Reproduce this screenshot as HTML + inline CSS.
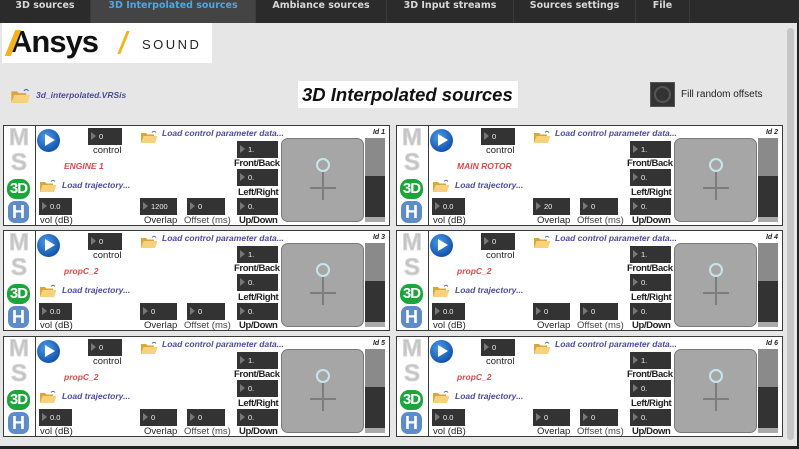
<!DOCTYPE html>
<html><head><meta charset="utf-8"><style>
*{margin:0;padding:0;box-sizing:border-box}
body{width:799px;height:449px;overflow:hidden;background:#e6e6e6;font-family:"Liberation Sans",sans-serif;position:relative}
.tabs{position:absolute;left:0;top:0;width:799px;height:23px;background:#2b2b2b}
.tab{position:absolute;top:0;height:23px;line-height:23px;text-align:center;color:#d8d8d8;font:bold 9.5px "DejaVu Sans",sans-serif;border-right:1px solid #3c3c3c}
.tab.sel{background:#444;color:#4aa8e8}
.a{position:absolute}
.panel{position:absolute;width:387px;height:101px;background:#fff;border:1.5px solid #3a3a3a}
.div{position:absolute;left:31px;top:0;bottom:0;border-left:1.5px solid #3a3a3a}
.ms{position:absolute;left:3px;width:24px;text-align:center;font:bold 24px "Liberation Sans",sans-serif;color:#c4c4c4;-webkit-text-stroke:1px #d8d8d8;line-height:22px}
.d3{position:absolute;left:3px;top:53px;width:23px;height:20px;border-radius:9px;background:#1da53b;color:#fff;font:bold 15px "Liberation Sans",sans-serif;text-align:center;line-height:20px;letter-spacing:-1px}
.hh{position:absolute;left:4px;top:75px;width:21px;height:22px;border-radius:7px;background:#5d8cc8;color:#fff;font:bold 18px "Liberation Sans",sans-serif;text-align:center;line-height:22px}
.play{position:absolute;left:33px;top:3px;width:23px;height:23px;border-radius:50%;background:radial-gradient(circle at 40% 35%,#4c9ae8,#1456b0 70%,#0c3c85)}
.play:after{content:"";position:absolute;left:8px;top:5px;border-left:10px solid #fff;border-top:6.5px solid transparent;border-bottom:6.5px solid transparent}
.nb{position:absolute;height:17px;background:#333;color:#eee;font-size:7.5px;line-height:17px;padding-left:11px}
.nb:before{content:"";position:absolute;left:3px;top:4px;border-left:5px solid #777;border-top:4.5px solid transparent;border-bottom:4.5px solid transparent}
.lb{position:absolute;font-size:9.5px;color:#222;white-space:nowrap;line-height:11px}
.bl{position:absolute;font-size:9.5px;font-weight:bold;color:#222;white-space:nowrap;letter-spacing:-0.4px;line-height:11px}
.ld{position:absolute;font:italic bold 8.5px "Liberation Sans",sans-serif;color:#4b4ba0;white-space:nowrap}
.nm{position:absolute;font:italic bold 8.5px "Liberation Sans",sans-serif;color:#e0474c;white-space:nowrap}
.pad{position:absolute;left:277px;top:12px;width:83px;height:84px;background:#a6a6a6;border:1.5px solid #7a7a7a;border-radius:7px}
.circ{position:absolute;left:34px;top:19px;width:14px;height:14px;border:2px solid #c6e6ec;border-radius:50%}
.vl{position:absolute;left:40px;top:33px;width:2px;height:28px;background:#7d7d7d}
.hl{position:absolute;left:28px;top:48px;width:26px;height:2px;background:#7d7d7d}
.m1{position:absolute;left:361px;top:12px;width:20px;height:38px;background:#8a8a8a}
.m2{position:absolute;left:361px;top:50px;width:20px;height:41px;background:#333}
.m3{position:absolute;left:361px;top:91px;width:20px;height:5px;background:#aaa}
.id{position:absolute;left:351px;top:3px;width:30px;text-align:right;font:italic bold 7px "Liberation Sans",sans-serif;color:#222}
</style></head><body>
<svg width="0" height="0" style="position:absolute"><defs>
<symbol id="f" viewBox="0 0 18 14"><path d="M1 3h5l1.5 1.5H14v8.5H1z" fill="#d9a63c"/><path d="M1 13 3.5 6H17.5L15 13z" fill="#f7d27a"/><path d="M12 2.5q2-2.5 4 0" stroke="#4a6cb0" fill="none" stroke-width="1"/></symbol>
</defs></svg>
<div class="tabs">
<div class="tab" style="left:0;width:91px">3D sources</div>
<div class="tab sel" style="left:91px;width:165px">3D Interpolated sources</div>
<div class="tab" style="left:256px;width:131px">Ambiance sources</div>
<div class="tab" style="left:387px;width:127px">3D Input streams</div>
<div class="tab" style="left:514px;width:122px">Sources settings</div>
<div class="tab" style="left:636px;width:54px">File</div>
</div>
<div class="a" style="left:2px;top:23px;width:210px;height:40px;background:#fff"></div>
<div class="a" style="left:10px;top:24px;font:bold 31px 'Liberation Sans',sans-serif;color:#111;letter-spacing:-1px;line-height:36px">Ansys</div>
<div class="a" style="left:10px;top:30px;width:6px;height:26px;background:#f5b21a;transform:skewX(-22deg)"></div>
<div class="a" style="left:122px;top:31px;width:3px;height:23px;background:#f5b21a;transform:skewX(-22deg)"></div>
<div class="a" style="left:142px;top:37px;font:13px 'Liberation Sans',sans-serif;letter-spacing:2.5px;color:#222">SOUND</div>
<svg class="a" style="left:10px;top:88px" width="21" height="16"><use href="#f"/></svg>
<div class="ld" style="left:36px;top:90px">3d_interpolated.VRSis</div>
<div class="a" style="left:298px;top:81px;width:220px;height:27px;background:#fff;font:italic bold 18.5px 'Liberation Sans',sans-serif;color:#111;line-height:27px;padding-left:4px;white-space:nowrap">3D Interpolated sources</div>
<div class="a" style="left:650px;top:82px;width:25px;height:25px;background:#333;border:1px solid #555"><div style="position:absolute;left:3px;top:3px;width:17px;height:17px;border:2px solid #555;border-radius:50%"></div></div>
<div class="a" style="left:681px;top:89px;font-size:10px;color:#222">Fill random offsets</div>
<div class="a" style="left:787px;top:28px;width:7px;height:412px;background:#c6c6c6;border-radius:4px"></div>
<div class="a" style="left:797px;top:23px;width:2px;height:426px;background:#222"></div>
<div class="a" style="left:0;top:446px;width:799px;height:3px;background:#222"></div>

<div class="panel" style="left:3px;top:125px"><div class="div"></div>
<div class="ms" style="top:1px">M</div><div class="ms" style="top:26px">S</div><div class="d3">3D</div><div class="hh">H</div>
<div class="play"></div><div class="nb" style="left:84px;top:2px;width:34px">0</div><div class="lb" style="left:89px;top:19px">control</div>
<svg class="a" style="left:136px;top:4px" width="18" height="14"><use href="#f"/></svg><div class="ld" style="left:158px;top:2px">Load control parameter data...</div>
<div class="nm" style="left:60px;top:35px">ENGINE 1</div>
<svg class="a" style="left:35px;top:53px" width="18" height="14"><use href="#f"/></svg><div class="ld" style="left:58px;top:54px">Load trajectory...</div>
<div class="nb" style="left:35px;top:72px;width:33px">0.0</div><div class="lb" style="left:36px;top:89px">vol (dB)</div>
<div class="nb" style="left:136px;top:72px;width:37px">1200</div><div class="lb" style="left:140px;top:89px">Overlap</div>
<div class="nb" style="left:183px;top:72px;width:38px">0</div><div class="lb" style="left:180px;top:89px;color:#444">Offset (ms)</div>
<div class="nb" style="left:233px;top:15px;width:41px">1.</div><div class="bl" style="left:230px;top:32px">Front/Back</div>
<div class="nb" style="left:233px;top:43px;width:41px">0.</div><div class="bl" style="left:234px;top:61px">Left/Right</div>
<div class="nb" style="left:233px;top:72px;width:41px">0.</div><div class="bl" style="left:235px;top:89px">Up/Down</div>
<div class="pad"><div class="circ"></div><div class="vl"></div><div class="hl"></div></div>
<div class="id">Id 1</div><div class="m1"></div><div class="m2"></div><div class="m3"></div></div>

<div class="panel" style="left:396px;top:125px"><div class="div"></div>
<div class="ms" style="top:1px">M</div><div class="ms" style="top:26px">S</div><div class="d3">3D</div><div class="hh">H</div>
<div class="play"></div><div class="nb" style="left:84px;top:2px;width:34px">0</div><div class="lb" style="left:89px;top:19px">control</div>
<svg class="a" style="left:136px;top:4px" width="18" height="14"><use href="#f"/></svg><div class="ld" style="left:158px;top:2px">Load control parameter data...</div>
<div class="nm" style="left:60px;top:35px">MAIN ROTOR</div>
<svg class="a" style="left:35px;top:53px" width="18" height="14"><use href="#f"/></svg><div class="ld" style="left:58px;top:54px">Load trajectory...</div>
<div class="nb" style="left:35px;top:72px;width:33px">0.0</div><div class="lb" style="left:36px;top:89px">vol (dB)</div>
<div class="nb" style="left:136px;top:72px;width:37px">20</div><div class="lb" style="left:140px;top:89px">Overlap</div>
<div class="nb" style="left:183px;top:72px;width:38px">0</div><div class="lb" style="left:180px;top:89px;color:#444">Offset (ms)</div>
<div class="nb" style="left:233px;top:15px;width:41px">1.</div><div class="bl" style="left:230px;top:32px">Front/Back</div>
<div class="nb" style="left:233px;top:43px;width:41px">0.</div><div class="bl" style="left:234px;top:61px">Left/Right</div>
<div class="nb" style="left:233px;top:72px;width:41px">0.</div><div class="bl" style="left:235px;top:89px">Up/Down</div>
<div class="pad"><div class="circ"></div><div class="vl"></div><div class="hl"></div></div>
<div class="id">Id 2</div><div class="m1"></div><div class="m2"></div><div class="m3"></div></div>

<div class="panel" style="left:3px;top:230px"><div class="div"></div>
<div class="ms" style="top:1px">M</div><div class="ms" style="top:26px">S</div><div class="d3">3D</div><div class="hh">H</div>
<div class="play"></div><div class="nb" style="left:84px;top:2px;width:34px">0</div><div class="lb" style="left:89px;top:19px">control</div>
<svg class="a" style="left:136px;top:4px" width="18" height="14"><use href="#f"/></svg><div class="ld" style="left:158px;top:2px">Load control parameter data...</div>
<div class="nm" style="left:60px;top:35px">propC_2</div>
<svg class="a" style="left:35px;top:53px" width="18" height="14"><use href="#f"/></svg><div class="ld" style="left:58px;top:54px">Load trajectory...</div>
<div class="nb" style="left:35px;top:72px;width:33px">0.0</div><div class="lb" style="left:36px;top:89px">vol (dB)</div>
<div class="nb" style="left:136px;top:72px;width:37px">0</div><div class="lb" style="left:140px;top:89px">Overlap</div>
<div class="nb" style="left:183px;top:72px;width:38px">0</div><div class="lb" style="left:180px;top:89px;color:#444">Offset (ms)</div>
<div class="nb" style="left:233px;top:15px;width:41px">1.</div><div class="bl" style="left:230px;top:32px">Front/Back</div>
<div class="nb" style="left:233px;top:43px;width:41px">0.</div><div class="bl" style="left:234px;top:61px">Left/Right</div>
<div class="nb" style="left:233px;top:72px;width:41px">0.</div><div class="bl" style="left:235px;top:89px">Up/Down</div>
<div class="pad"><div class="circ"></div><div class="vl"></div><div class="hl"></div></div>
<div class="id">Id 3</div><div class="m1"></div><div class="m2"></div><div class="m3"></div></div>

<div class="panel" style="left:396px;top:230px"><div class="div"></div>
<div class="ms" style="top:1px">M</div><div class="ms" style="top:26px">S</div><div class="d3">3D</div><div class="hh">H</div>
<div class="play"></div><div class="nb" style="left:84px;top:2px;width:34px">0</div><div class="lb" style="left:89px;top:19px">control</div>
<svg class="a" style="left:136px;top:4px" width="18" height="14"><use href="#f"/></svg><div class="ld" style="left:158px;top:2px">Load control parameter data...</div>
<div class="nm" style="left:60px;top:35px">propC_2</div>
<svg class="a" style="left:35px;top:53px" width="18" height="14"><use href="#f"/></svg><div class="ld" style="left:58px;top:54px">Load trajectory...</div>
<div class="nb" style="left:35px;top:72px;width:33px">0.0</div><div class="lb" style="left:36px;top:89px">vol (dB)</div>
<div class="nb" style="left:136px;top:72px;width:37px">0</div><div class="lb" style="left:140px;top:89px">Overlap</div>
<div class="nb" style="left:183px;top:72px;width:38px">0</div><div class="lb" style="left:180px;top:89px;color:#444">Offset (ms)</div>
<div class="nb" style="left:233px;top:15px;width:41px">1.</div><div class="bl" style="left:230px;top:32px">Front/Back</div>
<div class="nb" style="left:233px;top:43px;width:41px">0.</div><div class="bl" style="left:234px;top:61px">Left/Right</div>
<div class="nb" style="left:233px;top:72px;width:41px">0.</div><div class="bl" style="left:235px;top:89px">Up/Down</div>
<div class="pad"><div class="circ"></div><div class="vl"></div><div class="hl"></div></div>
<div class="id">Id 4</div><div class="m1"></div><div class="m2"></div><div class="m3"></div></div>

<div class="panel" style="left:3px;top:336px"><div class="div"></div>
<div class="ms" style="top:1px">M</div><div class="ms" style="top:26px">S</div><div class="d3">3D</div><div class="hh">H</div>
<div class="play"></div><div class="nb" style="left:84px;top:2px;width:34px">0</div><div class="lb" style="left:89px;top:19px">control</div>
<svg class="a" style="left:136px;top:4px" width="18" height="14"><use href="#f"/></svg><div class="ld" style="left:158px;top:2px">Load control parameter data...</div>
<div class="nm" style="left:60px;top:35px">propC_2</div>
<svg class="a" style="left:35px;top:53px" width="18" height="14"><use href="#f"/></svg><div class="ld" style="left:58px;top:54px">Load trajectory...</div>
<div class="nb" style="left:35px;top:72px;width:33px">0.0</div><div class="lb" style="left:36px;top:89px">vol (dB)</div>
<div class="nb" style="left:136px;top:72px;width:37px">0</div><div class="lb" style="left:140px;top:89px">Overlap</div>
<div class="nb" style="left:183px;top:72px;width:38px">0</div><div class="lb" style="left:180px;top:89px;color:#444">Offset (ms)</div>
<div class="nb" style="left:233px;top:15px;width:41px">1.</div><div class="bl" style="left:230px;top:32px">Front/Back</div>
<div class="nb" style="left:233px;top:43px;width:41px">0.</div><div class="bl" style="left:234px;top:61px">Left/Right</div>
<div class="nb" style="left:233px;top:72px;width:41px">0.</div><div class="bl" style="left:235px;top:89px">Up/Down</div>
<div class="pad"><div class="circ"></div><div class="vl"></div><div class="hl"></div></div>
<div class="id">Id 5</div><div class="m1"></div><div class="m2"></div><div class="m3"></div></div>

<div class="panel" style="left:396px;top:336px"><div class="div"></div>
<div class="ms" style="top:1px">M</div><div class="ms" style="top:26px">S</div><div class="d3">3D</div><div class="hh">H</div>
<div class="play"></div><div class="nb" style="left:84px;top:2px;width:34px">0</div><div class="lb" style="left:89px;top:19px">control</div>
<svg class="a" style="left:136px;top:4px" width="18" height="14"><use href="#f"/></svg><div class="ld" style="left:158px;top:2px">Load control parameter data...</div>
<div class="nm" style="left:60px;top:35px">propC_2</div>
<svg class="a" style="left:35px;top:53px" width="18" height="14"><use href="#f"/></svg><div class="ld" style="left:58px;top:54px">Load trajectory...</div>
<div class="nb" style="left:35px;top:72px;width:33px">0.0</div><div class="lb" style="left:36px;top:89px">vol (dB)</div>
<div class="nb" style="left:136px;top:72px;width:37px">0</div><div class="lb" style="left:140px;top:89px">Overlap</div>
<div class="nb" style="left:183px;top:72px;width:38px">0</div><div class="lb" style="left:180px;top:89px;color:#444">Offset (ms)</div>
<div class="nb" style="left:233px;top:15px;width:41px">1.</div><div class="bl" style="left:230px;top:32px">Front/Back</div>
<div class="nb" style="left:233px;top:43px;width:41px">0.</div><div class="bl" style="left:234px;top:61px">Left/Right</div>
<div class="nb" style="left:233px;top:72px;width:41px">0.</div><div class="bl" style="left:235px;top:89px">Up/Down</div>
<div class="pad"><div class="circ"></div><div class="vl"></div><div class="hl"></div></div>
<div class="id">Id 6</div><div class="m1"></div><div class="m2"></div><div class="m3"></div></div>
</body></html>
